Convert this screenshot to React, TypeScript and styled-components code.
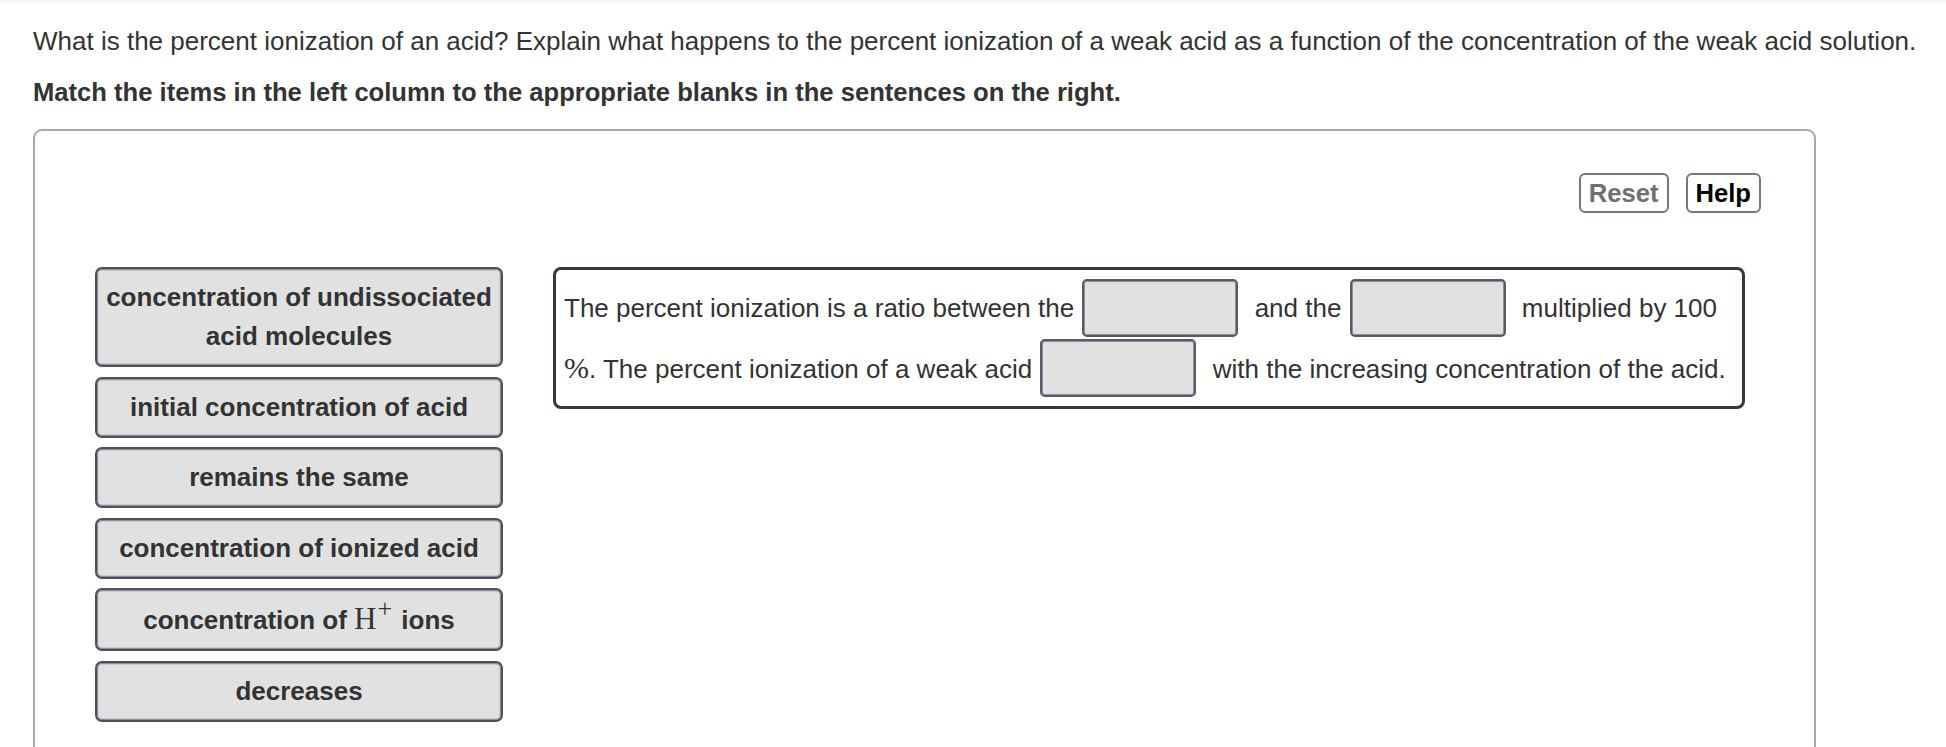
import React from 'react'
import styled, { createGlobalStyle } from 'styled-components'

const GlobalStyle = createGlobalStyle`
  html, body {
    margin: 0;
    padding: 0;
    background: #fff;
    overflow: hidden;
  }
  body {
    font-family: "Liberation Sans", Arial, sans-serif;
    color: #333;
  }
`

const Page = styled.div`
  border-top: 3px solid #f4f4f4;
  padding: 0 33px;
`

const Question = styled.p`
  margin: 23px 0 0;
  font-size: 26px;
  line-height: 30px;
  white-space: nowrap;
  color: #333;
`

const Instruction = styled.p`
  margin: 21px 0 0;
  font-size: 25.6px;
  line-height: 30px;
  font-weight: bold;
  color: #333;
`

const Panel = styled.section`
  margin-top: 22px;
  width: 1783px;
  box-sizing: border-box;
  border: 2px solid #a9a9a9;
  border-radius: 9px;
  padding: 42px 53px 80px 60px;
`

const Toolbar = styled.div`
  display: flex;
  justify-content: flex-end;
  gap: 17px;
`

const ToolButton = styled.button<{ $muted?: boolean }>`
  height: 40px;
  box-sizing: border-box;
  padding: 0 8px;
  background: #fff;
  border: 2px solid #6f7b82;
  border-radius: 6px;
  font-family: "Liberation Sans", Arial, sans-serif;
  font-size: 25.6px;
  font-weight: bold;
  color: ${p => (p.$muted ? '#707070' : '#000')};
  cursor: pointer;
`

const Board = styled.div`
  display: flex;
  align-items: flex-start;
  gap: 50px;
  margin-top: 54px;
`

const Choices = styled.div`
  display: flex;
  flex-direction: column;
  gap: 9.6px;
  width: 408px;
  flex-shrink: 0;
`

const Choice = styled.div`
  box-sizing: border-box;
  padding: 9px 4px;
  background: #e1e1e1;
  border: 2px solid #4f4f58;
  box-shadow: inset 0 0 0 1.2px #8c8c9c;
  border-radius: 7px;
  font-size: 26px;
  line-height: 39px;
  font-weight: bold;
  text-align: center;
  color: #333;
`

const MathRoman = styled.span`
  font-family: "Liberation Serif", "Times New Roman", serif;
  font-weight: normal;
  font-size: 31px;
`

const Sup = styled.sup`
  font-family: "Liberation Serif", "Times New Roman", serif;
  font-weight: normal;
  font-size: 26px;
  line-height: 0;
  vertical-align: 12px;
  margin: 0 2px 0 1px;
`

const Sentences = styled.div`
  width: 1192px;
  box-sizing: border-box;
  border: 3px solid #313a3f;
  border-radius: 8px;
  padding: 8px 8px 7px 8px;
  font-size: 26px;
  line-height: 60px;
  color: #333;
`

const Blank = styled.span`
  display: inline-block;
  vertical-align: top;
  width: 156px;
  height: 58px;
  box-sizing: border-box;
  margin: 1px 9px 0 1px;
  background: #e1e1e1;
  border: 2px solid #5a5a66;
  box-shadow: inset 0 0 0 1px #8e8e9e;
  border-radius: 5px;
`

const Percent = styled.span`
  font-family: "Liberation Serif", "Times New Roman", serif;
  font-size: 30px;
`

const choices: React.ReactNode[] = [
  <>concentration of undissociated<br />acid molecules</>,
  'initial concentration of acid',
  'remains the same',
  'concentration of ionized acid',
  <>concentration of <MathRoman>H</MathRoman><Sup>+</Sup> ions</>,
  'decreases',
]

export default function App() {
  return (
    <>
      <GlobalStyle />
      <Page>
        <Question>
          What is the percent ionization of an acid? Explain what happens to the percent ionization of a weak acid as a function of the concentration of the weak acid solution.
        </Question>
        <Instruction>Match the items in the left column to the appropriate blanks in the sentences on the right.</Instruction>
        <Panel>
          <Toolbar>
            <ToolButton $muted>Reset</ToolButton>
            <ToolButton>Help</ToolButton>
          </Toolbar>
          <Board>
            <Choices>
              {choices.map((c, i) => (
                <Choice key={i}>{c}</Choice>
              ))}
            </Choices>
            <Sentences>
              The percent ionization is a ratio between the <Blank /> and the <Blank /> multiplied by 100 <Percent>%</Percent>. The percent ionization of a weak acid <Blank /> with the increasing concentration of the acid.
            </Sentences>
          </Board>
        </Panel>
      </Page>
    </>
  )
}
